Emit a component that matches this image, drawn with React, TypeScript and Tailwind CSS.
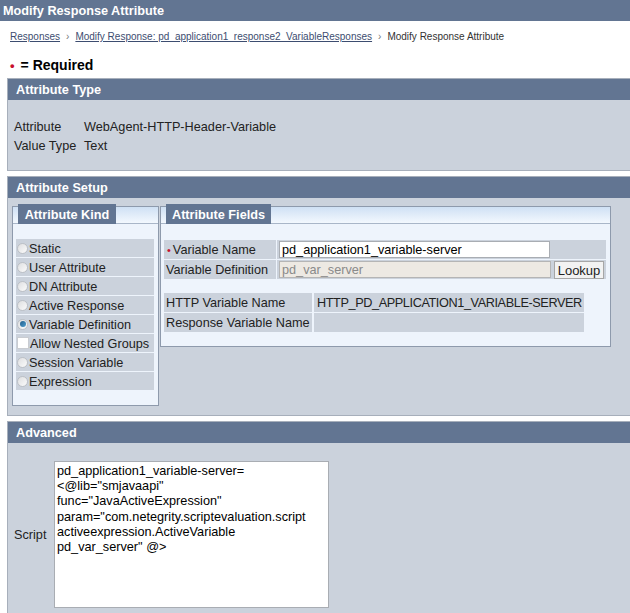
import React from "react";

const font = { fontFamily: '"Liberation Sans", Arial, sans-serif' };

function Section({ title, children, className = "" }: { title: string; children: React.ReactNode; className?: string }) {
  return (
    <div className={"ml-[7px] border-t border-l border-b border-[#a7afbb] " + className}>
      <div className="h-[21px] bg-[#627592] flex items-center pl-[8px] pt-[3px] text-white font-bold text-[12.7px]">{title}</div>
      <div className="bg-[#cbd2dc]">{children}</div>
    </div>
  );
}

function Fieldset({ legend, legendW, className, children }: { legend: string; legendW: string; className: string; children: React.ReactNode }) {
  return (
    <div className={"relative border border-[#8e9aac] bg-[#eef4fc] " + className}>
      <div className="h-[17px] bg-gradient-to-b from-[#cfe0f4] to-[#f3f8fe] border-b border-[#a9b6c8]" />
      <div className={"absolute left-[5px] top-[-3px] h-[20px] pt-[3px] bg-[#627592] text-white font-bold text-[12.7px] flex items-center justify-center " + legendW}>
        {legend}
      </div>
      {children}
    </div>
  );
}

function Radio({ checked = false }: { checked?: boolean }) {
  return (
    <span className="inline-flex items-center justify-center w-[11px] h-[11px] rounded-full border border-[#bcc0c6] bg-gradient-to-br from-[#dedfe1] to-[#fbfbfb] mr-[1px] shrink-0">
      {checked && <span className="w-[6px] h-[6px] rounded-full bg-gradient-to-br from-[#1f5d8a] to-[#4f9fd0]" />}
    </span>
  );
}

export default function App() {
  const kinds: { label: string; type: "radio" | "check"; checked?: boolean }[] = [
    { label: "Static", type: "radio" },
    { label: "User Attribute", type: "radio" },
    { label: "DN Attribute", type: "radio" },
    { label: "Active Response", type: "radio" },
    { label: "Variable Definition", type: "radio", checked: true },
    { label: "Allow Nested Groups", type: "check" },
    { label: "Session Variable", type: "radio" },
    { label: "Expression", type: "radio" },
  ];
  const script = [
    "pd_application1_variable-server=",
    '<@lib="smjavaapi"',
    'func="JavaActiveExpression"',
    'param="com.netegrity.scriptevaluation.script',
    "activeexpression.ActiveVariable",
    'pd_var_server" @>',
  ];
  return (
    <div style={font} className="w-[630px] h-[613px] overflow-hidden bg-white text-[#222] text-[12.7px]">
      <div className="h-[21px] bg-[#627592] text-white font-bold flex items-center pl-[3px] pt-[3px]">Modify Response Attribute</div>

      <div className="mt-[10px] h-[12px] pl-[10px] text-[10px] leading-[12px] flex items-center text-[#333]">
        <span className="underline text-[#3d4d70]">Responses</span>
        <span className="mx-[6px] text-[#777]">›</span>
        <span className="underline text-[#3d4d70]">Modify Response: pd_application1_response2_VariableResponses</span>
        <span className="mx-[6px] text-[#777]">›</span>
        <span>Modify Response Attribute</span>
      </div>

      <div className="mt-[14px] h-[17px] pl-[10px] flex items-center font-bold text-[14px] text-black">
        <span className="text-[#c8102e] mr-[6px] text-[13px]">•</span>= Required
      </div>

      <Section title="Attribute Type" className="mt-[4px]">
        <div className="h-[70px] pl-[6px] pt-[18px]">
          <div className="flex h-[19px] items-center">
            <span className="w-[70px]">Attribute</span>
            <span>WebAgent-HTTP-Header-Variable</span>
          </div>
          <div className="flex h-[19px] items-center">
            <span className="w-[70px]">Value Type</span>
            <span>Text</span>
          </div>
        </div>
      </Section>

      <Section title="Attribute Setup" className="mt-[5px]">
        <div className="flex items-start gap-[1px] pl-[4px] pt-[8px] pb-[9px]">
          <Fieldset legend="Attribute Kind" legendW="w-[98px]" className="w-[147px]">
            <div className="pl-[3px] pr-[4px] pt-[15px] pb-[15px] flex flex-col gap-[1px]">
              {kinds.map((k) => (
                <div key={k.label} className="h-[18px] bg-[#cbd2dc] flex items-center pl-[1px] whitespace-nowrap">
                  {k.type === "radio" ? (
                    <Radio checked={k.checked} />
                  ) : (
                    <span className="inline-block w-[12px] h-[12px] bg-white border border-[#c9ccd1] mr-[1px] shrink-0" />
                  )}
                  <span className="pt-[3px]">{k.label}</span>
                </div>
              ))}
            </div>
          </Fieldset>

          <Fieldset legend="Attribute Fields" legendW="w-[105px]" className="w-[451px]">
            <div className="pl-[3px] pt-[16px] pb-[14px]">
              <div className="flex flex-col gap-[1px] w-[442px]">
                <div className="flex h-[19px] gap-[1px]">
                  <div className="w-[112px] shrink-0 bg-[#cbd2dc] flex items-center pl-[3px] pt-[2px] whitespace-nowrap">
                    <span className="text-[#c8102e] mr-[2px] text-[11px]">•</span>Variable Name
                  </div>
                  <div className="flex-1 bg-[#cbd2dc] flex items-center pl-[2px]">
                    <div className="w-[271px] h-[17px] bg-white border border-[#a9adb3] flex items-center pl-[2px] pt-[2px] text-black">
                      pd_application1_variable-server
                    </div>
                  </div>
                </div>
                <div className="flex h-[19px] gap-[1px]">
                  <div className="w-[112px] shrink-0 bg-[#cbd2dc] flex items-center pl-[2px] pt-[2px] whitespace-nowrap">Variable Definition</div>
                  <div className="flex-1 bg-[#cbd2dc] flex items-center pl-[2px]">
                    <div className="w-[272px] h-[17px] bg-[#ede9e3] border border-[#b5b5b5] flex items-center pl-[2px] pt-[2px] text-[#8a8a8a]">
                      pd_var_server
                    </div>
                    <div className="ml-[3px] w-[50px] h-[18px] bg-[#f2f2f2] border border-[#a6a6a6] flex items-center justify-center pt-[2px] text-[13px] text-[#222]">
                      Lookup
                    </div>
                  </div>
                </div>
              </div>

              <div className="mt-[14px] flex flex-col gap-[1px] w-[420px]">
                <div className="flex h-[19px] gap-[2px]">
                  <div className="w-[148px] shrink-0 bg-[#cbd2dc] flex items-center pl-[2px] pt-[3px] whitespace-nowrap">HTTP Variable Name</div>
                  <div className="flex-1 min-w-0 bg-[#cbd2dc] flex items-center pl-[3px] pt-[3px] whitespace-nowrap tracking-[-0.4px]">HTTP_PD_APPLICATION1_VARIABLE-SERVER</div>
                </div>
                <div className="flex h-[19px] gap-[2px]">
                  <div className="w-[148px] shrink-0 bg-[#cbd2dc] flex items-center pl-[2px] pt-[3px] whitespace-nowrap">Response Variable Name</div>
                  <div className="flex-1 bg-[#cbd2dc]" />
                </div>
              </div>
            </div>
          </Fieldset>
        </div>
      </Section>

      <Section title="Advanced" className="mt-[5px] border-b-0">
        <div className="pt-[18px] pl-[6px] pb-[10px] flex items-center">
          <span className="w-[40px] pt-[2px]">Script</span>
          <div className="w-[275px] h-[147px] bg-white border border-[#a9adb3] pl-[2px] pt-[2px] text-black leading-[15.2px] whitespace-pre">
            {script.map((l) => (
              <div key={l}>{l}</div>
            ))}
          </div>
        </div>
      </Section>
    </div>
  );
}
